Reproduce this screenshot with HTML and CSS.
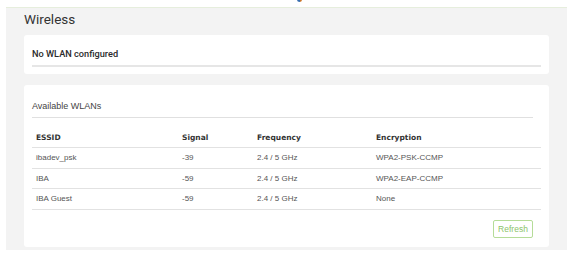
FILE: index.html
```html
<!DOCTYPE html>
<html lang="en">
<head>
    <meta charset="UTF-8">
    <title>Wireless</title>
<link rel="stylesheet" href="styles.css">
</head>
<body>
    <div class="topbar">
        <span class="top-icon"></span>
    </div>

    <div class="page">
        <h1 class="title">Wireless</h1>

        <div class="card first">
            <div class="card-head strong">No WLAN configured</div>
        </div>

        <div class="card">
            <div class="card-head narrow">Available WLANs</div>
            <table class="wlans">
                <thead>
                    <tr>
                        <th class="c-essid">ESSID</th>
                        <th class="c-signal">Signal</th>
                        <th class="c-freq">Frequency</th>
                        <th>Encryption</th>
                    </tr>
                </thead>
                <tbody>
                    <tr><td>ibadev_psk</td><td>-39</td><td>2.4 / 5 GHz</td><td>WPA2-PSK-CCMP</td></tr>
                    <tr><td>IBA</td><td>-59</td><td>2.4 / 5 GHz</td><td>WPA2-EAP-CCMP</td></tr>
                    <tr><td>IBA Guest</td><td>-59</td><td>2.4 / 5 GHz</td><td>None</td></tr>
                </tbody>
            </table>
            <div class="actions">
                <button class="btn">Refresh</button>
            </div>
        </div>
    </div>
</body>
</html>
```

FILE: styles.css
```css
body {
    font-family: "Liberation Sans", Arial, sans-serif;
    margin: 0;
    padding: 0;
    background-color: white;
    color: #444;
}
.topbar {
    height: 7px;
    position: relative;
    overflow: hidden;
}
.top-icon {
    position: absolute;
    left: 297px;
    top: -3px;
    width: 5px;
    height: 5px;
    border-radius: 50%;
    background: linear-gradient(90deg, #3a6fb0 50%, #c9742a 50%);
}
.page {
    margin: 0 3px 0 6px;
    background-color: #f3f3f3;
    border-top: 1px solid #e6eedd;
    padding: 2px 18px 0 18px;
    height: 243px;
    box-sizing: border-box;
}
.title {
    font-family: Roboto, "Noto Sans", sans-serif;
    font-size: 13.5px;
    font-weight: 400;
    color: #333;
    margin: 0 0 7px 0;
    line-height: 18px;
}
.card {
    background: white;
    border-radius: 3px;
    padding: 0 8px;
    margin-bottom: 11px;
}
.card.first {
    padding-bottom: 7px;
}
.card-head {
    font-size: 9px;
    color: #444;
    height: 19px;
    line-height: 16px;
    padding-top: 13px;
    border-bottom: 1px solid #e0e0e0;
}
.card-head.strong {
    font-family: Roboto, "Noto Sans", sans-serif;
    font-weight: 500;
    font-size: 9.2px;
    color: #2a2a2a;
    height: 30px;
    line-height: 38px;
    padding-top: 0;
    border-bottom: 2px solid #e6e6e6;
}
.card-head.narrow {
    margin-right: 8px;
}
.wlans {
    width: 100%;
    border-collapse: collapse;
    margin-top: 9px;
    font-size: 8px;
    color: #555;
}
.wlans th {
    font-family: "DejaVu Sans", sans-serif;
    font-weight: bold;
    font-size: 7.5px;
    color: #333;
    text-align: left;
    height: 20px;
    padding: 0 4px;
    border-bottom: 1px solid #e2e2e2;
}
.wlans td {
    height: 19.5px;
    padding: 0 4px;
    border-bottom: 1px solid #e2e2e2;
}
.c-essid { width: 138px; }
.c-signal { width: 67px; }
.c-freq { width: 111px; }
.actions {
    display: flex;
    justify-content: flex-end;
    padding: 10px 8px 9px 0;
}
.btn {
    font-family: "Liberation Sans", Arial, sans-serif;
    font-size: 8.5px;
    color: #8cc36a;
    background: white;
    border: 1px solid #b5dc98;
    border-radius: 2px;
    width: 40px;
    height: 18px;
    padding: 0;
}
```
